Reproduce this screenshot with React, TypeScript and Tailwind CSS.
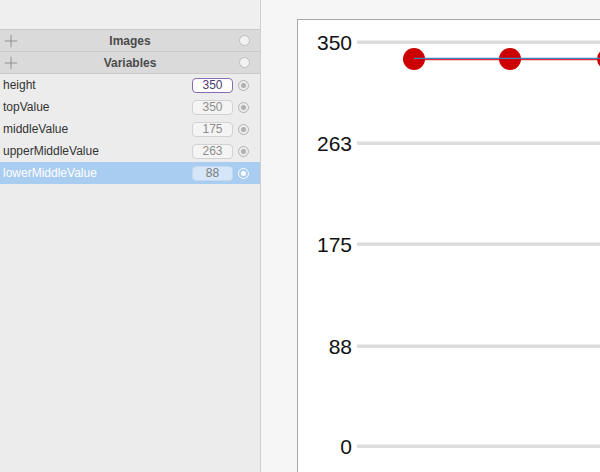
import { Plus } from 'lucide-react'

const variables = [
  { name: 'height', value: '350', focused: true },
  { name: 'topValue', value: '350' },
  { name: 'middleValue', value: '175' },
  { name: 'upperMiddleValue', value: '263' },
  { name: 'lowerMiddleValue', value: '88', selected: true },
]

const ticks = [
  { label: '350', y: 22 },
  { label: '263', y: 123 },
  { label: '175', y: 224 },
  { label: '88', y: 326 },
  { label: '0', y: 426 },
]

function SectionHeader({ title }: { title: string }) {
  return (
    <div className="grid h-[22px] grid-cols-[40px_1fr_40px] items-center border-t border-[#c9c9c9] bg-[#dadada]">
      <Plus className="ml-[1px] h-[20px] w-[20px] text-[#7a7a7a]" strokeWidth={0.9} />
      <span className="text-center text-[12px] font-bold text-[#4b4b4b]">{title}</span>
      <span className="ml-auto mr-[10px] h-[11px] w-[11px] rounded-full border border-[#bdbdbd] bg-[#f2f2f2]" />
    </div>
  )
}

function VariableRow({ name, value, focused, selected }: { name: string; value: string; focused?: boolean; selected?: boolean }) {
  return (
    <div className={`flex h-[22px] items-center pl-[3px] ${selected ? 'bg-[#a9ccf1]' : ''}`}>
      <span className={`flex-1 text-[12px] ${selected ? 'text-white' : 'text-[#333]'}`}>{name}</span>
      <div
        className={`flex h-[15px] w-[41px] items-center justify-center rounded-[4px] border text-[12px] ${
          focused
            ? 'border-[#8a6bb3] bg-white text-[#4d3a70]'
            : selected
              ? 'border-[#c3d9f0] bg-[#d4e6f8] text-[#7b7b7b]'
              : 'border-[#d2d2d2] bg-[#f4f4f4] text-[#8c8c8c]'
        }`}
      >
        {value}
      </div>
      <span
        className={`ml-[5px] mr-[11px] flex h-[11px] w-[11px] items-center justify-center rounded-full border ${
          selected ? 'border-white' : 'border-[#b3b3b3]'
        }`}
      >
        <span className={`h-[5px] w-[5px] rounded-full ${selected ? 'bg-white' : 'bg-[#b0b0b0]'}`} />
      </span>
    </div>
  )
}

export default function App() {
  return (
    <div
      className="flex h-[472px] w-[600px] overflow-hidden bg-[#f6f6f6]"
      style={{ fontFamily: '"Liberation Sans", Arial, sans-serif' }}
    >
      {/* Sidebar */}
      <aside className="flex w-[261px] shrink-0 flex-col border-r border-[#cfcfcf] bg-[#ececec]">
        <div className="h-[29px] bg-[#efefef]" />
        <SectionHeader title="Images" />
        <SectionHeader title="Variables" />
        <div className="border-t border-[#c9c9c9]">
          {variables.map((v) => (
            <VariableRow key={v.name} {...v} />
          ))}
        </div>
      </aside>

      {/* Canvas area */}
      <main className="flex-1 pl-[36px] pt-[19px]">
        <div className="h-full w-full border-l border-t border-[#a8a8a8] bg-white">
          <svg width="400" height="460" className="block">
            {ticks.map((t) => (
              <g key={t.label}>
                <rect x={59} y={t.y - 1.5} width={400} height={3.5} fill="#dcdcdc" />
                <text
                  x={54}
                  y={t.y + 7.5}
                  textAnchor="end"
                  fontSize={21}
                  fill="#111"
                  fontFamily='"Liberation Sans", Arial, sans-serif'
                >
                  {t.label}
                </text>
              </g>
            ))}
            <line x1={116} y1={39.6} x2={400} y2={39.6} stroke="#e0303a" strokeWidth={1.3} />
            <circle cx={116} cy={39} r={11} fill="#cc0000" />
            <circle cx={212} cy={39} r={11} fill="#cc0000" />
            <circle cx={310} cy={39} r={11} fill="#cc0000" />
            <line x1={116} y1={38.4} x2={400} y2={38.4} stroke="#3f82c4" strokeWidth={1.3} />
          </svg>
        </div>
      </main>
    </div>
  )
}
